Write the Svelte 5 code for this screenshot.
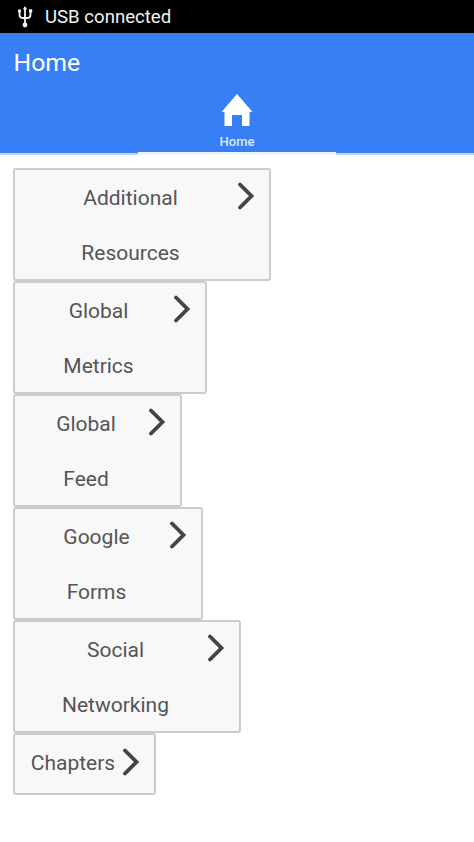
<script>
  const items = [
    { lines: ['Additional', 'Resources'], w: 258 },
    { lines: ['Global', 'Metrics'], w: 194 },
    { lines: ['Global', 'Feed'], w: 169 },
    { lines: ['Google', 'Forms'], w: 190 },
    { lines: ['Social', 'Networking'], w: 228 },
    { lines: ['Chapters'], w: 143 }
  ];
</script>

<div class="screen">
  <div class="status">
    <svg class="usb" width="16" height="22" viewBox="0 0 16 22" fill="none" stroke="#f2f2f2" stroke-width="1.8">
      <path d="M8 2v17" />
      <path d="M2.5 6v2.5q0 3.5 3 3.5h5q3 0 3-3.5V6" />
      <circle cx="8" cy="19" r="2.4" fill="#f2f2f2" stroke="none" />
      <path d="M8 0l2.2 3.4H5.8z" fill="#f2f2f2" stroke="none" />
      <circle cx="2.5" cy="5" r="1.7" fill="#f2f2f2" stroke="none" />
      <rect x="12" y="3.3" width="3.2" height="3.2" fill="#f2f2f2" stroke="none" />
    </svg>
    <span>USB connected</span>
  </div>
  <header class="bar">
    <div class="title">Home</div>
    <div class="tabs">
      <div class="tab">
        <svg width="32" height="33" viewBox="0 0 32 33" fill="#fff">
          <path d="M16 0L31.5 18H28.5V32H21V21H11V32H3.5V18H0.5Z" />
        </svg>
        <span>Home</span>
      </div>
    </div>
  </header>
  <main class="list">
    {#each items as item}
      <button class="item" class:single={item.lines.length === 1} style="width: {item.w}px">
        <span class="text">
          {#each item.lines as line}
            <span class="line">{line}</span>
          {/each}
        </span>
        <svg class="chev" width="18" height="28" viewBox="0 0 18 28" fill="none" stroke="#444" stroke-width="3.8" stroke-linecap="round">
          <path d="M3 2.5L14.5 14L3 25.5" />
        </svg>
      </button>
    {/each}
  </main>
</div>

<style>
  :global(body) {
    margin: 0;
    background: #fff;
  }
  .screen {
    width: 474px;
    height: 842px;
    overflow: hidden;
    font-family: Roboto, "Liberation Sans", sans-serif;
  }
  .status {
    height: 33px;
    background: #000;
    color: #f2f2f2;
    display: flex;
    align-items: center;
    gap: 12px;
    padding-left: 17px;
    font-size: 18.6px;
  }
  .bar {
    height: 122px;
    box-sizing: border-box;
    background: #387ef5;
    color: #fff;
    border-bottom: 2px solid #c4d4ee;
    display: flex;
    flex-direction: column;
  }
  .title {
    font-size: 24.8px;
    line-height: 30px;
    padding: 15px 0 0 13.5px;
  }
  .tabs {
    display: flex;
    justify-content: center;
    margin-top: 16px;
    flex: 1;
  }
  .tab {
    width: 198px;
    box-sizing: border-box;
    border-bottom: 3px solid #eef4fb;
    margin-bottom: -2px;
    display: flex;
    flex-direction: column;
    align-items: center;
    font-size: 13px;
    font-weight: 500;
    color: #dce9ff;
  }
  .tab svg {
    flex: none;
  }
  .tab span {
    margin-top: 7px;
    line-height: 16px;
  }
  .list {
    display: flex;
    flex-direction: column;
    align-items: flex-start;
    padding: 13px 0 0 13px;
  }
  .item {
    display: flex;
    flex: none;
    box-sizing: border-box;
    height: 113px;
    padding: 0 14px 0 0;
    background: #f8f8f8;
    border: 2px solid #ccc;
    border-radius: 3px;
    font: inherit;
    font-size: 21px;
    color: #555;
  }
  .item.single {
    height: 62px;
  }
  .text {
    flex: 1;
    display: flex;
    flex-direction: column;
    align-items: center;
    padding-top: 1px;
  }
  .line {
    height: 55px;
    line-height: 55px;
    white-space: nowrap;
  }
  .chev {
    flex: none;
    margin-top: 12px;
    margin-left: -9px;
  }
  .single .chev {
    margin-top: 13px;
  }
</style>
